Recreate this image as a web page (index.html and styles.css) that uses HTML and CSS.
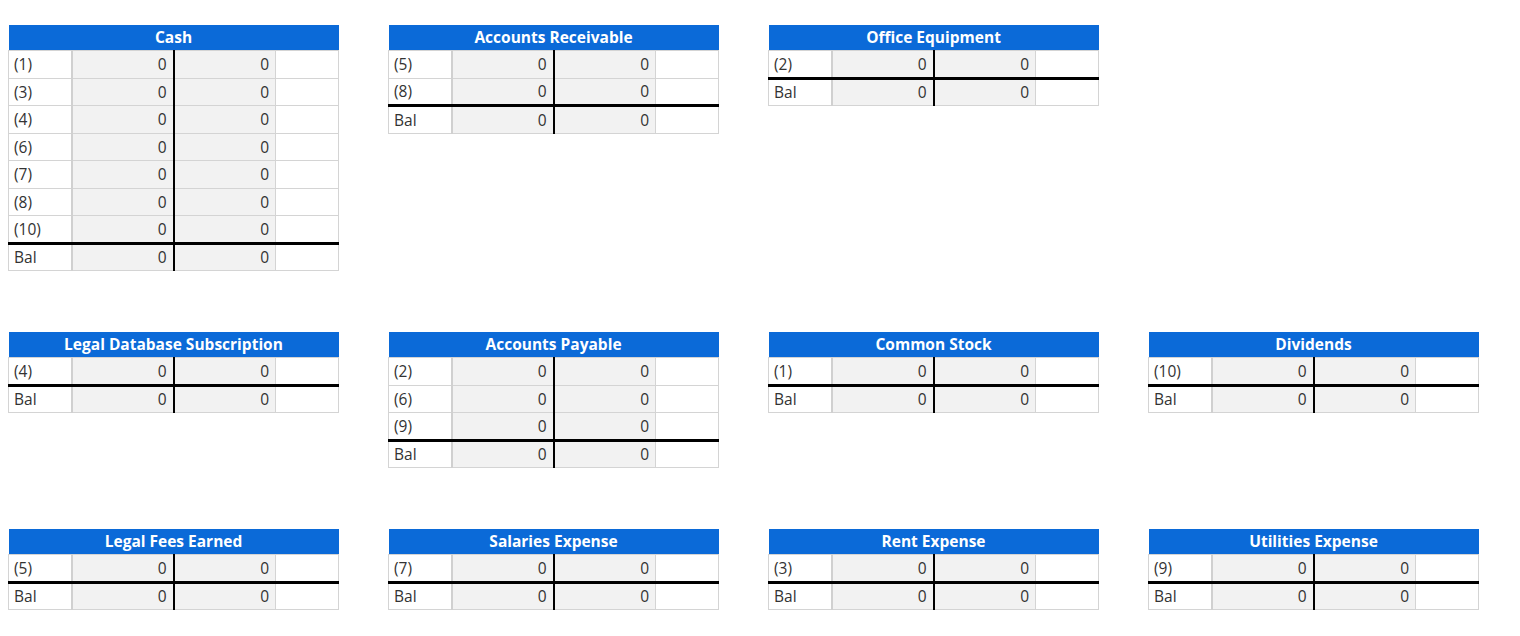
FILE: index.html
```html
<!DOCTYPE html>
<html>
<head>
<meta charset="utf-8">
<link rel="stylesheet" href="styles.css">
</head>
<body>
<div class="board">
  <table class="t">
    <colgroup><col class="c-lbl"><col class="c-amt"><col class="c-amt"><col class="c-lbl"></colgroup>
    <tr><th colspan="4">Cash</th></tr>
    <tr><td class="lbl">(1)</td><td class="dr">0</td><td class="cr">0</td><td class="ex"></td></tr>
    <tr><td class="lbl">(3)</td><td class="dr">0</td><td class="cr">0</td><td class="ex"></td></tr>
    <tr><td class="lbl">(4)</td><td class="dr">0</td><td class="cr">0</td><td class="ex"></td></tr>
    <tr><td class="lbl">(6)</td><td class="dr">0</td><td class="cr">0</td><td class="ex"></td></tr>
    <tr><td class="lbl">(7)</td><td class="dr">0</td><td class="cr">0</td><td class="ex"></td></tr>
    <tr><td class="lbl">(8)</td><td class="dr">0</td><td class="cr">0</td><td class="ex"></td></tr>
    <tr><td class="lbl">(10)</td><td class="dr">0</td><td class="cr">0</td><td class="ex"></td></tr>
    <tr class="bal"><td class="lbl">Bal</td><td class="dr">0</td><td class="cr">0</td><td class="ex"></td></tr>
  </table>
  <table class="t">
    <colgroup><col class="c-lbl"><col class="c-amt"><col class="c-amt"><col class="c-lbl"></colgroup>
    <tr><th colspan="4">Accounts Receivable</th></tr>
    <tr><td class="lbl">(5)</td><td class="dr">0</td><td class="cr">0</td><td class="ex"></td></tr>
    <tr><td class="lbl">(8)</td><td class="dr">0</td><td class="cr">0</td><td class="ex"></td></tr>
    <tr class="bal"><td class="lbl">Bal</td><td class="dr">0</td><td class="cr">0</td><td class="ex"></td></tr>
  </table>
  <table class="t">
    <colgroup><col class="c-lbl"><col class="c-amt"><col class="c-amt"><col class="c-lbl"></colgroup>
    <tr><th colspan="4">Office Equipment</th></tr>
    <tr><td class="lbl">(2)</td><td class="dr">0</td><td class="cr">0</td><td class="ex"></td></tr>
    <tr class="bal"><td class="lbl">Bal</td><td class="dr">0</td><td class="cr">0</td><td class="ex"></td></tr>
  </table>
  <div></div>

  <table class="t">
    <colgroup><col class="c-lbl"><col class="c-amt"><col class="c-amt"><col class="c-lbl"></colgroup>
    <tr><th colspan="4">Legal Database Subscription</th></tr>
    <tr><td class="lbl">(4)</td><td class="dr">0</td><td class="cr">0</td><td class="ex"></td></tr>
    <tr class="bal"><td class="lbl">Bal</td><td class="dr">0</td><td class="cr">0</td><td class="ex"></td></tr>
  </table>
  <table class="t">
    <colgroup><col class="c-lbl"><col class="c-amt"><col class="c-amt"><col class="c-lbl"></colgroup>
    <tr><th colspan="4">Accounts Payable</th></tr>
    <tr><td class="lbl">(2)</td><td class="dr">0</td><td class="cr">0</td><td class="ex"></td></tr>
    <tr><td class="lbl">(6)</td><td class="dr">0</td><td class="cr">0</td><td class="ex"></td></tr>
    <tr><td class="lbl">(9)</td><td class="dr">0</td><td class="cr">0</td><td class="ex"></td></tr>
    <tr class="bal"><td class="lbl">Bal</td><td class="dr">0</td><td class="cr">0</td><td class="ex"></td></tr>
  </table>
  <table class="t">
    <colgroup><col class="c-lbl"><col class="c-amt"><col class="c-amt"><col class="c-lbl"></colgroup>
    <tr><th colspan="4">Common Stock</th></tr>
    <tr><td class="lbl">(1)</td><td class="dr">0</td><td class="cr">0</td><td class="ex"></td></tr>
    <tr class="bal"><td class="lbl">Bal</td><td class="dr">0</td><td class="cr">0</td><td class="ex"></td></tr>
  </table>
  <table class="t">
    <colgroup><col class="c-lbl"><col class="c-amt"><col class="c-amt"><col class="c-lbl"></colgroup>
    <tr><th colspan="4">Dividends</th></tr>
    <tr><td class="lbl">(10)</td><td class="dr">0</td><td class="cr">0</td><td class="ex"></td></tr>
    <tr class="bal"><td class="lbl">Bal</td><td class="dr">0</td><td class="cr">0</td><td class="ex"></td></tr>
  </table>

  <table class="t">
    <colgroup><col class="c-lbl"><col class="c-amt"><col class="c-amt"><col class="c-lbl"></colgroup>
    <tr><th colspan="4">Legal Fees Earned</th></tr>
    <tr><td class="lbl">(5)</td><td class="dr">0</td><td class="cr">0</td><td class="ex"></td></tr>
    <tr class="bal"><td class="lbl">Bal</td><td class="dr">0</td><td class="cr">0</td><td class="ex"></td></tr>
  </table>
  <table class="t">
    <colgroup><col class="c-lbl"><col class="c-amt"><col class="c-amt"><col class="c-lbl"></colgroup>
    <tr><th colspan="4">Salaries Expense</th></tr>
    <tr><td class="lbl">(7)</td><td class="dr">0</td><td class="cr">0</td><td class="ex"></td></tr>
    <tr class="bal"><td class="lbl">Bal</td><td class="dr">0</td><td class="cr">0</td><td class="ex"></td></tr>
  </table>
  <table class="t">
    <colgroup><col class="c-lbl"><col class="c-amt"><col class="c-amt"><col class="c-lbl"></colgroup>
    <tr><th colspan="4">Rent Expense</th></tr>
    <tr><td class="lbl">(3)</td><td class="dr">0</td><td class="cr">0</td><td class="ex"></td></tr>
    <tr class="bal"><td class="lbl">Bal</td><td class="dr">0</td><td class="cr">0</td><td class="ex"></td></tr>
  </table>
  <table class="t">
    <colgroup><col class="c-lbl"><col class="c-amt"><col class="c-amt"><col class="c-lbl"></colgroup>
    <tr><th colspan="4">Utilities Expense</th></tr>
    <tr><td class="lbl">(9)</td><td class="dr">0</td><td class="cr">0</td><td class="ex"></td></tr>
    <tr class="bal"><td class="lbl">Bal</td><td class="dr">0</td><td class="cr">0</td><td class="ex"></td></tr>
  </table>
</div>
</body>
</html>
```

FILE: styles.css
```css
html, body {
  margin: 0;
  padding: 0;
  background: #fff;
}
body {
  padding: 25px 8px 0 8px;
  font-family: "Open Sans", "Liberation Sans", sans-serif;
  font-size: 15.5px;
  color: #333;
}
.board {
  display: grid;
  grid-template-columns: repeat(4, 330px);
  column-gap: 50px;
  row-gap: 61px;
  align-items: start;
}
.t {
  width: 330px;
  table-layout: fixed;
  border-collapse: collapse;
}
.c-lbl { width: 63px; }
.c-amt { width: 102px; }
.t th {
  background: #0b6ad8;
  color: #fff;
  font-weight: 700;
  font-size: 15.5px;
  height: 25px;
  padding: 0;
  text-align: center;
  border: 0;
  line-height: 25px;
}
.t td {
  height: 27.5px;
  padding: 0 6px 0 5px;
  border: 1px solid #d4d4d4;
  box-sizing: border-box;
  line-height: 20px;
  white-space: nowrap;
}
.t td.lbl {
  text-align: left;
  border-right: 2px solid #d0d0d0;
}
.t td.dr {
  background: #f2f2f2;
  text-align: right;
  border-right: 2px solid #000;
}
.t td.cr {
  background: #f2f2f2;
  text-align: right;
}
.t td.ex {
  background: #fff;
}
.t tr.bal td {
  border-top: 3px solid #000;
}
```
